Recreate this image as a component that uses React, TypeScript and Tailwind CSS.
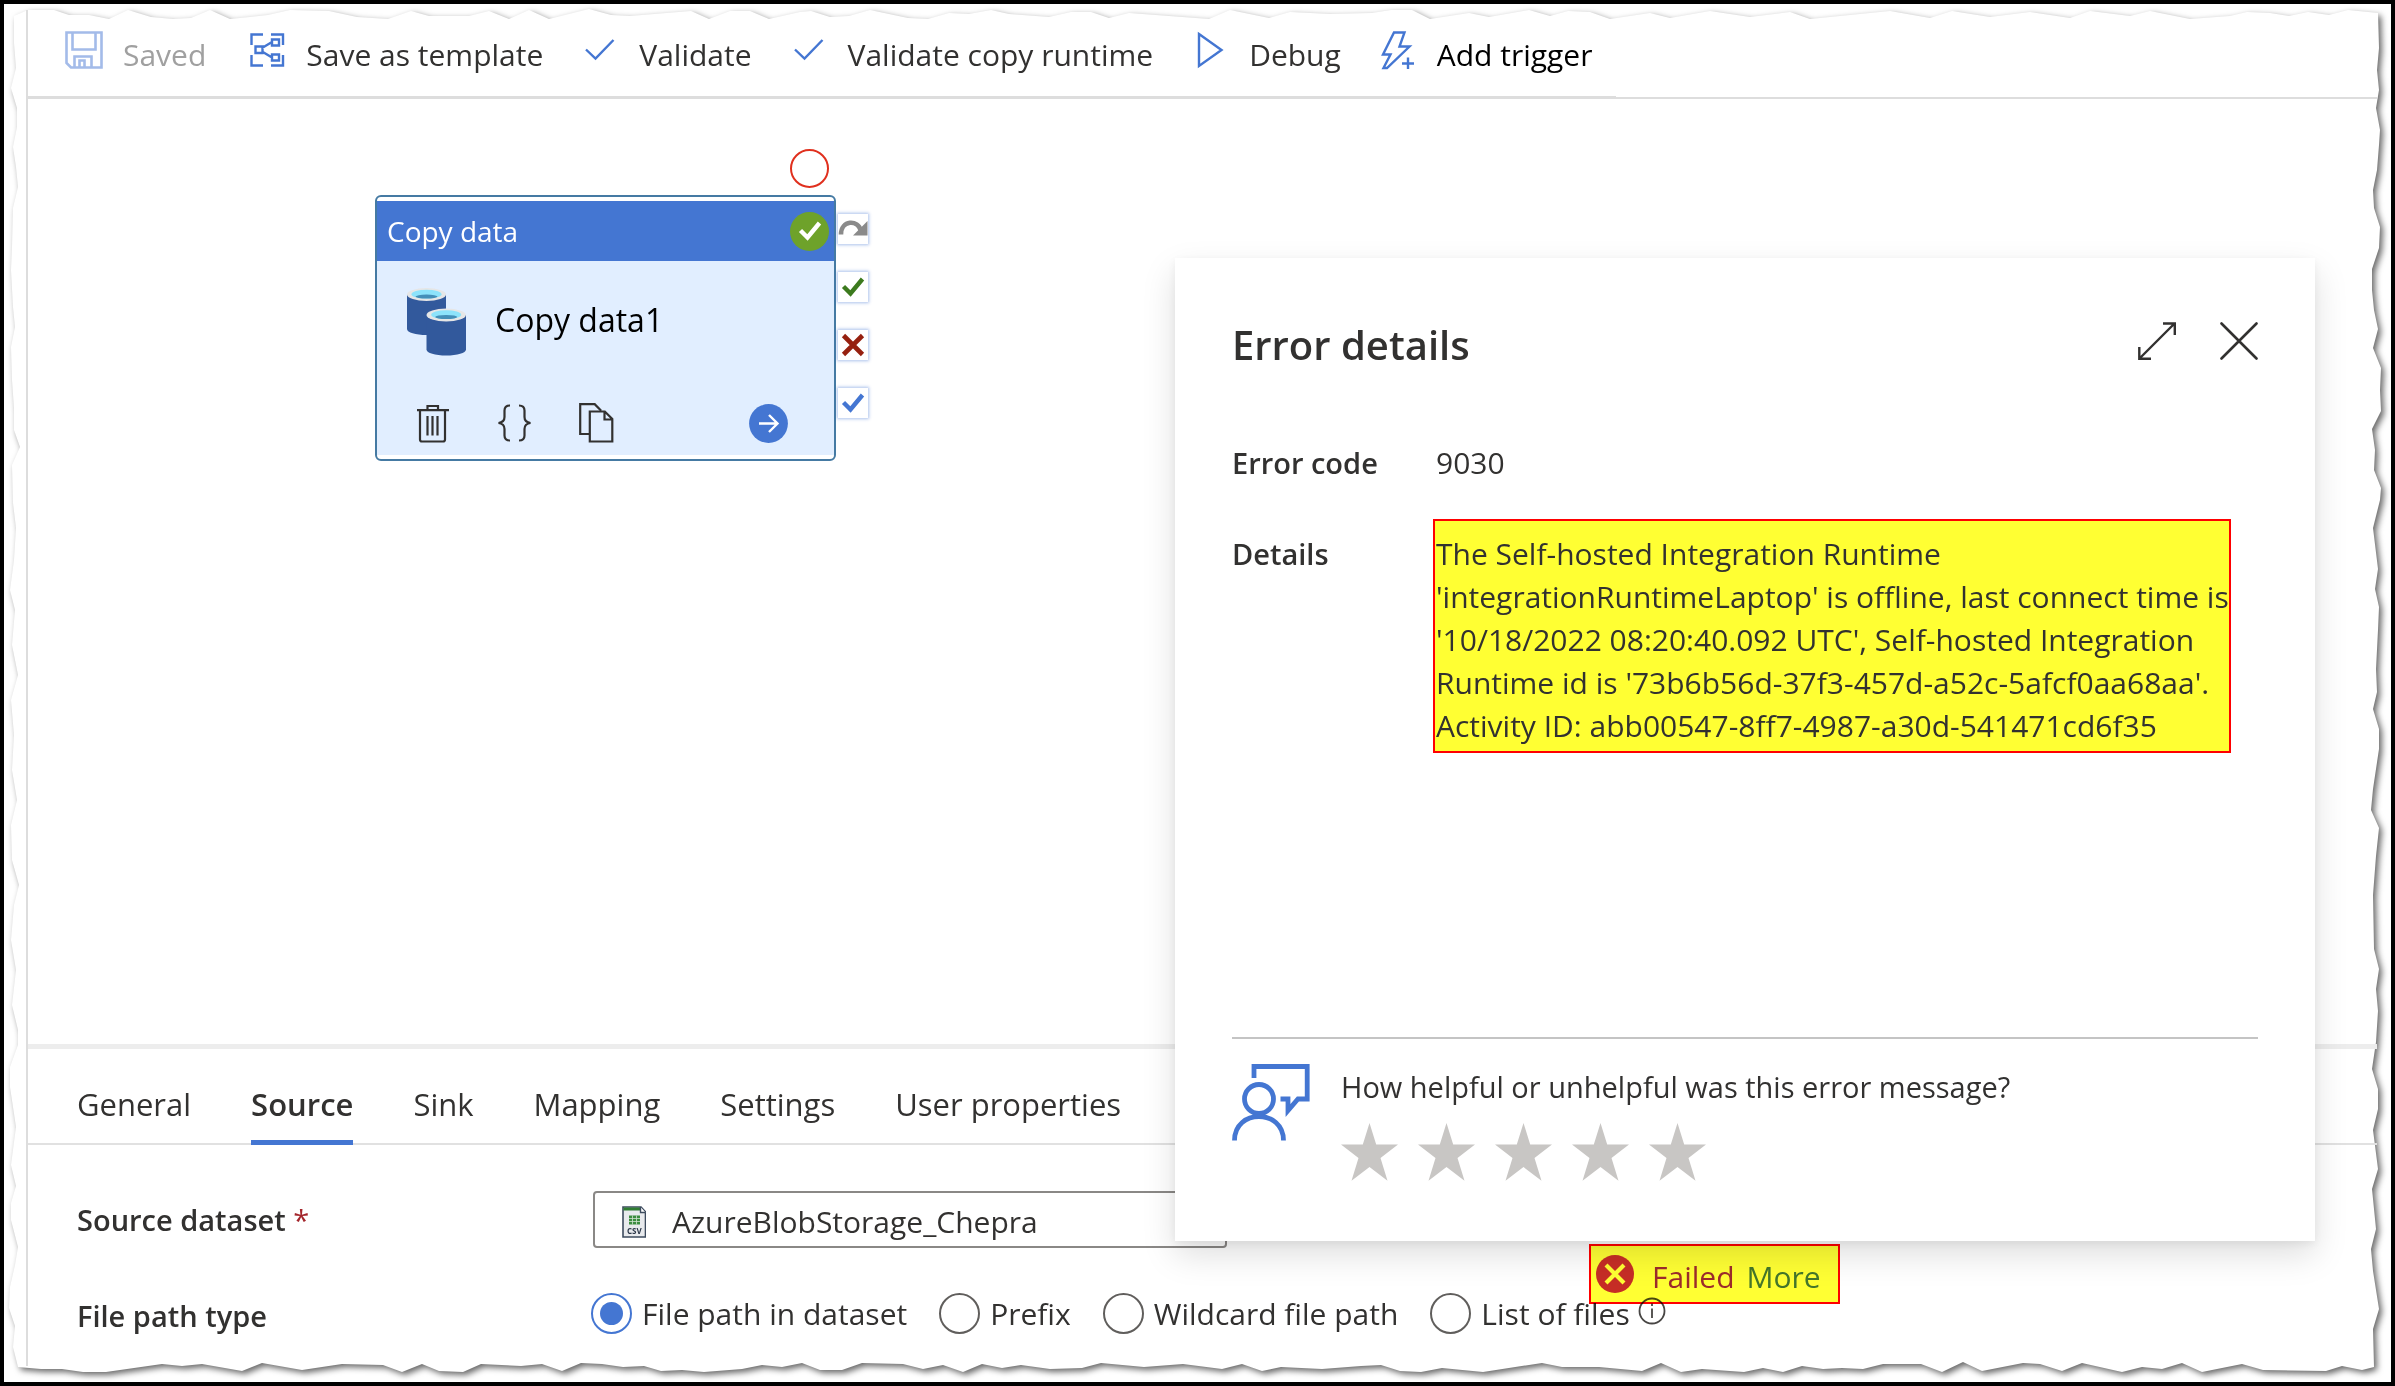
import { useState } from "react";
import type { ReactNode } from "react";

function SaveIcon() {
  return (
    <svg width="38" height="38" fill="none" stroke="#a3bbe9" strokeWidth="2.6">
      <path d="M1.5 1.5h35v35H6l-4.500-4.500z" />
      <path d="M7.500 2v16.500h23V2M9.500 36V25.500h17V36M14.500 36v-6.500h5V36" />
    </svg>
  );
}

function TemplateIcon() {
  return (
    <svg width="35" height="34" fill="none" stroke="#4476d2" strokeWidth="2.4">
      <path d="M13 1.500H1.500V12M1.500 22v10.500H13M21 1.500h12V12M21 32.500h12V22" />
      <path d="M5.500 13.500h7v6.500h-7zM22 6.500h7v6h-7zM22 21.500h7v6h-7zM12 15l10-6M12 18.500l10 6" />
    </svg>
  );
}

function ThinCheckIcon() {
  return (
    <svg width="30" height="22" fill="none" stroke="#4476d2" strokeWidth="2.4">
      <path d="M1 10.500l9.500 9L28.500 1" />
    </svg>
  );
}

function PlayIcon() {
  return (
    <svg width="27" height="38" fill="none" stroke="#4476d2" strokeWidth="2.4">
      <path d="M2 3l22.500 16L2 35z" />
    </svg>
  );
}

function TriggerIcon() {
  return (
    <svg width="34" height="39" fill="none" stroke="#4476d2" strokeWidth="2.4">
      <path d="M13 1.500h10.500L18.500 15.500h10L6 37H2.500L9.500 23.500H2z" />
      <path d="M27 26.500V38M21 32.500h12" />
    </svg>
  );
}

function StorageIcon() {
  return (
    <svg width="59" height="68">
      <path d="M0 6.500V41c0 3.600 8.700 6 19.500 6S39 44.600 39 41V6.500z" fill="#32599c" />
      <ellipse cx="19.5" cy="6.500" rx="19.5" ry="6.500" fill="#e6e6e6" />
      <ellipse cx="19.5" cy="6.200" rx="15" ry="4.400" fill="#8de3fb" />
      <ellipse cx="19.5" cy="8.600" rx="11" ry="2" fill="#458fb8" />
      <path d="M19.500 27v34.500c0 3.600 8.700 6 19.700 6S59 65.100 59 61.500V27z" fill="#32599c" />
      <ellipse cx="39.200" cy="27" rx="19.700" ry="6.500" fill="#e6e6e6" />
      <ellipse cx="39.200" cy="26.700" rx="15" ry="4.400" fill="#8de3fb" />
      <ellipse cx="39.200" cy="29" rx="11" ry="2" fill="#458fb8" />
    </svg>
  );
}

function TrashIcon() {
  return (
    <svg width="32" height="39" fill="none" stroke="#323130" strokeWidth="2.200">
      <path d="M0 6.200h32M10.500 6V2h10.500v4" />
      <path d="M3 6.500v29q0 2 2 2h21q2 0 2-2v-29" />
      <path d="M10.500 12v19.500M15.500 12v19.500M20.500 12v19.500" />
    </svg>
  );
}

function BracesIcon() {
  return (
    <svg width="35" height="38" fill="none" stroke="#323130" strokeWidth="2.200">
      <path d="M13 1.500c-4 0-5.500 1.500-5.500 5v6.500c0 4-2 5.500-6 6 4 .5 6 2 6 6v6.500c0 3.500 1.500 5 5.500 5" />
      <path d="M22 1.500c4 0 5.500 1.500 5.500 5v6.500c0 4 2 5.500 6 6-4 .5-6 2-6 6v6.500c0 3.500-1.500 5-5.500 5" />
    </svg>
  );
}

function CopyIcon() {
  return (
    <svg width="35" height="40" fill="none" stroke="#323130" strokeWidth="2.200">
      <path d="M10.500 31H1.200V1.200h14.500l6.500 6.500" />
      <path d="M10.800 8.500h15l7.500 7.500v22.500H10.800zM25.500 8.500v8h8" />
    </svg>
  );
}

function ArrowCircleIcon() {
  return (
    <svg width="39" height="39" fill="none" stroke="#fff" strokeWidth="2.400">
      <circle cx="19.500" cy="19.500" r="19.400" fill="#4476d2" stroke="none" />
      <path d="M10 19.500h19M20 11l8.500 8.500L20 28" />
    </svg>
  );
}

function BoldCheck({ color }: { color: string }) {
  return (
    <svg width="24" height="22" fill="none" stroke={color} strokeWidth="4.400">
      <path d="M2.500 10.500l7 7L21.500 3" />
    </svg>
  );
}

function BoldCross() {
  return (
    <svg width="24" height="24" fill="none" stroke="#96200f" strokeWidth="4.600">
      <path d="M2.500 2.500l19 19M21.500 2.500l-19 19" />
    </svg>
  );
}

function SkipIcon() {
  return (
    <svg width="30" height="18" viewBox="0 0 30 18">
      <path d="M3 14.500C3 0 20 -1 23 11" fill="none" stroke="#8a8a8a" strokeWidth="4.600" />
      <path d="M29.500 1v14.500H15z" fill="#8a8a8a" />
    </svg>
  );
}

function ExpandIcon() {
  return (
    <svg width="38" height="38" fill="none" stroke="#323130" strokeWidth="2.400">
      <path d="M2 36L36 2M25 1.500h11.800V13M1.300 25v11.700H13" />
    </svg>
  );
}

function CloseIcon() {
  return (
    <svg width="38" height="38" fill="none" stroke="#323130" strokeWidth="2.600" strokeLinecap="round">
      <path d="M1.500 1.500l35 35M36.500 1.500l-35 35" />
    </svg>
  );
}

function FeedbackIcon() {
  return (
    <svg width="78" height="77" fill="none" stroke="#4476d2" strokeWidth="4.800">
      <path d="M22 14V2.500h53.200V35H66L56 46.500V35h-7.500" />
      <circle cx="27" cy="35" r="14.500" />
      <path d="M2.500 76.500c0-32 49-32 49 0" />
    </svg>
  );
}

function CsvIcon() {
  return (
    <svg width="24" height="32">
      <path d="M1 1h18l4.500 5v25H1z" fill="#e8eaed" stroke="#3d4b5e" strokeWidth="1.600" />
      <path d="M1.500 1.500h17v3h-17z" fill="#2f7d32" />
      <path d="M18.500 1v5.500h5" fill="#fff" stroke="#3d4b5e" strokeWidth="1.400" />
      <path d="M7 9.500h11v9H7z" fill="#3b8c3f" />
      <path d="M7 12.500h11M7 15.500h11M10.500 9.500v9M14.500 9.500v9" stroke="#cfe3cf" strokeWidth="0.800" />
      <text x="12.300" y="27.500" textAnchor="middle" className="fill-[#2a3648] font-bold text-[8px]">
        CSV
      </text>
    </svg>
  );
}

function InfoIcon() {
  return (
    <svg width="28" height="28" fill="none" stroke="#484644" strokeWidth="1.800">
      <circle cx="14" cy="14" r="12.500" />
      <path d="M14 11.500V21M14 6.500v2.500" />
    </svg>
  );
}

function FailedIcon() {
  return (
    <svg width="38" height="38">
      <circle cx="19" cy="19" r="19" fill="#c62d25" />
      <path d="M10 10l18 18M28 10L10 28" stroke="#ffff33" strokeWidth="4.200" />
    </svg>
  );
}

// Outline of the sheet with ragged edges, clockwise from the top left
const SHEET_OUTLINE =
  "14,16 28,10 54,10 69,15 89,15 109,19 128,10 151,17 173,19 191,18 210,10 230,19 250,17 268,15 290,10 329,11 357,17 388,19 411,11 429,16 469,16 489,11 509,19 529,10 549,19 589,9 611,15 630,16 691,11 709,19 730,11 750,11 769,19 800,12 811,11 830,17 849,16 870,10 908,18 928,19 949,13 969,14 991,10 1009,14 1049,17 1071,12 1091,12 1109,18 1129,13 1209,19 1230,10 1269,18 1290,12 1330,14 1372,13 1391,10 1412,10 1430,19 1469,13 1489,17 1529,10 1550,16 1568,11 1590,12 1610,19 1650,13 1670,18 1710,11 1750,17 1790,12 1810,19 1850,15 1890,11 1930,18 1952,11 1990,17 2030,12 2070,18 2090,11 2130,16 2150,11 2190,19 2230,16 2247,12 2270,13 2289,16 2308,12 2329,15 2348,10 2378,13 " +
  "2379,48 2377,70 2379,90 2376,108 2380,130 2379,145 2377,170 2373,190 2374,208 2380,227 2379,248 2372,269 2372,290 2374,310 2378,329 2373,348 2381,368 2380,390 2381,411 2372,429 2375,450 2374,470 2381,488 2380,500 2373,528 2378,569 2375,589 2379,607 2378,630 2376,669 2377,692 2373,709 2379,729 2379,749 2373,789 2371,810 2379,828 2376,856 2373,895 2374,949 2379,969 2376,989 2378,1011 2376,1042 2372,1069 2378,1089 2378,1109 2373,1130 2378,1169 2372,1189 2376,1229 2371,1249 2373,1271 2379,1309 2373,1329 2374,1367 " +
  "2362,1370 2342,1366 2326,1371 2263,1370 2242,1364 2202,1372 2182,1363 2162,1369 2142,1367 2122,1372 2082,1363 2062,1371 2040,1364 2023,1363 1982,1371 1963,1362 1942,1372 1921,1364 1883,1364 1863,1369 1842,1368 1823,1369 1802,1366 1783,1372 1763,1368 1744,1372 1702,1369 1681,1372 1661,1363 1642,1371 1599,1367 1562,1367 1542,1363 1483,1372 1442,1368 1421,1372 1400,1371 1381,1365 1361,1366 1322,1369 1281,1367 1262,1371 1242,1364 1222,1369 1183,1364 1144,1367 1101,1363 1082,1368 1050,1369 1021,1365 1002,1368 982,1364 963,1372 943,1365 923,1369 903,1364 862,1363 842,1370 820,1370 802,1363 782,1367 762,1365 742,1369 704,1372 682,1370 661,1371 644,1366 623,1367 602,1364 581,1363 562,1371 542,1364 521,1366 481,1364 463,1372 439,1371 422,1364 402,1372 383,1365 342,1364 302,1370 262,1363 242,1371 202,1364 182,1366 162,1364 106,1372 83,1372 62,1369 41,1369 18,1367 " +
  "13,1347 15,1326 9,1308 10,1287 15,1265 18,1247 11,1220 11,1203 16,1186 11,1165 16,1127 10,1087 10,1067 18,1045 18,1030 12,1005 16,970 11,940 14,905 19,885 12,860 11,825 17,800 12,770 14,735 11,700 18,675 12,645 15,610 10,590 14,560 16,528 13,503 12,465 20,447 14,430 14,408 12,380 11,347 15,327 13,307 11,270 12,247 13,208 18,187 16,167 13,147 17,127 17,108 11,88 16,68 14,43";

function TornSheet() {
  return (
    <svg
      className="absolute inset-0 h-full w-full"
      viewBox="4 4 2387 1378"
      preserveAspectRatio="none"
      aria-hidden="true"
    >
      <polygon
        points={SHEET_OUTLINE}
        fill="#fff"
        className="drop-shadow-[3px_3px_3px_rgba(0,0,0,0.6)]"
      />
    </svg>
  );
}

type Tool = { label: string; icon: ReactNode; className: string };

const tools: Tool[] = [
  { label: "Saved", icon: <SaveIcon />, className: "mr-1 text-[#a0a0a0]" },
  { label: "Save as template", icon: <TemplateIcon />, className: "text-[#323130]" },
  { label: "Validate", icon: <ThinCheckIcon />, className: "text-[#323130]" },
  { label: "Validate copy runtime", icon: <ThinCheckIcon />, className: "text-[#323130]" },
  { label: "Debug", icon: <PlayIcon />, className: "text-[#323130]" },
  { label: "Add trigger", icon: <TriggerIcon />, className: "text-black" },
];

function Toolbar() {
  return (
    <header className="border-b-2 border-[#dddddd]">
      <nav className="flex w-fit gap-[38px] border-b border-[#dddddd] pt-[18px] pr-6 pb-[23px] pl-[37px]">
        {tools.map((tool) => (
          <button
            key={tool.label}
            type="button"
            disabled={tool.label === "Saved"}
            className={`flex items-start gap-5 ${tool.className}`}
          >
            <span className="mt-[3px] flex h-[38px] w-[38px] items-center justify-center">
              {tool.icon}
            </span>
            <span className="pt-[9px] leading-[36px]">{tool.label}</span>
          </button>
        ))}
      </nav>
    </header>
  );
}

function ActivityNode() {
  return (
    <div className="absolute top-[96px] left-[347px] flex items-start">
      <div className="w-[461px] rounded-md border-2 border-[#457aa3] bg-white py-1">
        <div className="flex h-[60px] items-center justify-between bg-[#4476d2] pr-[5px] pl-[10px]">
          <span className="text-[28px] text-white">Copy data</span>
          <span className="flex h-[39px] w-[39px] items-center justify-center rounded-full bg-[#6ea22a]">
            <BoldCheck color="#fff" />
          </span>
        </div>
        <div className="bg-[#e1eeff] pt-[27px] pb-3">
          <div className="flex items-start gap-[29px] pl-[30px]">
            <StorageIcon />
            <span className="pt-2 text-[32px] text-black">Copy data1</span>
          </div>
          <div className="mt-[47px] flex items-center pr-[46px] pl-[40px]">
            <button type="button" aria-label="Delete">
              <TrashIcon />
            </button>
            <button type="button" aria-label="Code" className="ml-[48px]">
              <BracesIcon />
            </button>
            <button type="button" aria-label="Clone" className="ml-[47px]">
              <CopyIcon />
            </button>
            <button type="button" aria-label="Open" className="ml-auto">
              <ArrowCircleIcon />
            </button>
          </div>
        </div>
      </div>
      <div className="ml-[2px] flex flex-col gap-[28px] pt-[19px]">
        <Port>
          <SkipIcon />
        </Port>
        <Port>
          <BoldCheck color="#3c7a1e" />
        </Port>
        <Port>
          <BoldCross />
        </Port>
        <Port>
          <BoldCheck color="#4476d2" />
        </Port>
      </div>
      <span className="absolute -top-[46px] left-[415px] h-[39px] w-[39px] rounded-full border-2 border-[#e0301e]" />
    </div>
  );
}

function Port({ children }: { children: ReactNode }) {
  return (
    <span className="flex h-[30px] w-[30px] items-center justify-center bg-white shadow-[0_0_3px_1px_rgba(68,118,210,0.45)]">
      {children}
    </span>
  );
}

const tabs = ["General", "Source", "Sink", "Mapping", "Settings", "User properties"];

const pathTypes = ["File path in dataset", "Prefix", "Wildcard file path", "List of files"];

function PropertiesPanel() {
  const [activeTab, setActiveTab] = useState("Source");
  const [pathType, setPathType] = useState("File path in dataset");

  return (
    <section className="border-t-[5px] border-[#ededed] pb-8">
      <nav className="flex gap-[60px] border-b-2 border-[#e1e1e1] pt-[31px] pl-[49px] text-[31px]">
        {tabs.map((tab) => (
          <button
            key={tab}
            type="button"
            onClick={() => setActiveTab(tab)}
            className={`-mb-[2px] border-b-[5px] pb-3 leading-[48px] ${
              activeTab === tab ? "border-[#4476d2] font-semibold" : "border-transparent"
            }`}
          >
            {tab}
          </button>
        ))}
      </nav>

      <div className="mt-[46px] flex items-center pl-[49px]">
        <label htmlFor="dataset" className="w-[516px] text-[29px] font-semibold">
          Source dataset <span className="font-normal text-[#a4262c]">*</span>
        </label>
        <div className="relative">
          <select
            id="dataset"
            className="h-[57px] w-[634px] appearance-none rounded border-2 border-[#8a8886] bg-white pt-[3px] pl-[77px]"
          >
            <option>AzureBlobStorage_Chepra</option>
          </select>
          <span className="pointer-events-none absolute top-[15px] left-[29px]">
            <CsvIcon />
          </span>
        </div>
      </div>

      <fieldset className="mt-[45px] flex items-center pl-[49px] leading-[41px]">
        <legend className="float-left w-[514px] pt-1 text-[29px] leading-[37px] font-semibold">
          File path type
        </legend>
        {pathTypes.map((type) => (
          <label key={type} className="mr-[32px] flex items-center gap-[10px] last-of-type:mr-2">
            <input
              type="radio"
              name="path-type"
              checked={pathType === type}
              onChange={() => setPathType(type)}
              className="h-[41px] w-[41px] appearance-none rounded-full border-2 border-[#605e5c] bg-clip-content p-[7px] checked:border-[#4476d2] checked:bg-[#4476d2]"
            />
            {type}
          </label>
        ))}
        <span className="pb-[6px]">
          <InfoIcon />
        </span>
      </fieldset>
    </section>
  );
}

function ErrorDialog() {
  return (
    <div
      role="dialog"
      aria-labelledby="error-title"
      className="absolute right-[62px] bottom-[125px] w-[1140px] bg-white px-[57px] pt-[59px] pb-[60px] shadow-[0_14px_32px_rgba(0,0,0,0.13),0_3px_8px_rgba(0,0,0,0.06)]"
    >
      <div className="flex items-start justify-between">
        <h2 id="error-title" className="text-[40px] leading-[56px] font-semibold">
          Error details
        </h2>
        <div className="flex gap-[44px]">
          <button type="button" aria-label="Expand" className="h-[48px]">
            <ExpandIcon />
          </button>
          <button type="button" aria-label="Close" className="h-[48px]">
            <CloseIcon />
          </button>
        </div>
      </div>

      <dl className="mt-[68px] min-h-[596px] leading-[43px]">
        <div className="flex">
          <dt className="w-[201px] shrink-0 text-[29px] font-semibold">Error code</dt>
          <dd className="pl-[3px]">9030</dd>
        </div>
        <div className="mt-[35px] flex">
          <dt className="w-[201px] shrink-0 pt-[13px] text-[29px] font-semibold">Details</dt>
          <dd className="w-[798px] border-2 border-[#ff0000] bg-[#ffff33] pt-[11px] pb-1 pl-px whitespace-nowrap">
            The Self-hosted Integration Runtime
            <br />
            'integrationRuntimeLaptop' is offline, last connect time is
            <br />
            '10/18/2022 08:20:40.092 UTC', Self-hosted Integration
            <br />
            Runtime id is '73b6b56d-37f3-457d-a52c-5afcf0aa68aa'.
            <br />
            Activity ID: abb00547-8ff7-4987-a30d-541471cd6f35
          </dd>
        </div>
      </dl>

      <div className="flex gap-[31px] border-t-2 border-[#c4c4c4] pt-[25px]">
        <FeedbackIcon />
        <div>
          <p className="pt-px text-[29px] leading-[43px]">
            How helpful or unhelpful was this error message?
          </p>
          <div className="mt-[15px] flex gap-5">
            {[1, 2, 3, 4, 5].map((rate) => (
              <button key={rate} type="button" aria-label={`Rate ${rate}`}>
                <svg width="57" height="58" fill="#c8c6c4">
                  <path d="M28.500 0l6.700 21.500H57L39.500 35l7 22.700L28.500 44l-18 13.700 7-22.700L0 21.500h21.800z" />
                </svg>
              </button>
            ))}
          </div>
        </div>
      </div>
    </div>
  );
}

function StatusTag() {
  return (
    <div className="absolute right-[537px] bottom-[62px] flex h-[60px] w-[251px] items-center border-2 border-[#ff0000] bg-[#ffff33] pl-[5px] mix-blend-multiply">
      <FailedIcon />
      <span className="ml-[18px] pt-1 text-[#9c2b2b]">Failed</span>
      <a href="#more" className="ml-3 pt-1 text-[#44762a]">
        More
      </a>
    </div>
  );
}

export default function App() {
  return (
    <div className="flex min-h-screen bg-black p-1 font-['Open_Sans','Noto_Sans',sans-serif] text-[30px] text-[#323130]">
      <div className="relative flex flex-1 bg-white">
        <TornSheet />
        <main className="relative mt-[6px] mr-[14px] mb-[16px] ml-[22px] flex flex-1 flex-col border-l-2 border-[#dddddd]">
          <Toolbar />
          <div className="relative min-h-[400px] flex-1">
            <ActivityNode />
          </div>
          <PropertiesPanel />
          <ErrorDialog />
          <StatusTag />
        </main>
      </div>
    </div>
  );
}
